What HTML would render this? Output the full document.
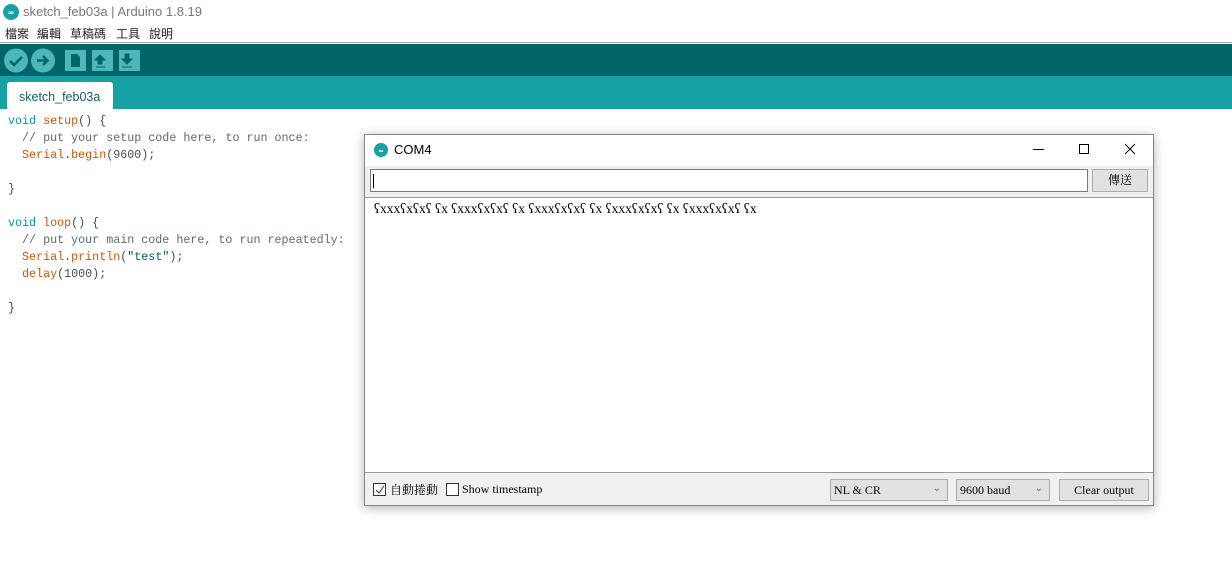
<!DOCTYPE html>
<html><head><meta charset="utf-8"><style>
*{margin:0;padding:0;box-sizing:border-box}
body{width:1232px;height:568px;background:#fff;position:relative;overflow:hidden;font-family:"Liberation Sans","Noto Sans CJK TC",sans-serif}
.a{position:absolute}
.code{font-family:"Liberation Mono",monospace;font-size:11.7px;line-height:17px;white-space:pre;color:#434f54}
.kw{color:#00979c}.fn{color:#d35400}.cm{color:#5c6a6e}
.tb{background:#4db7bb;width:21px;height:21px;position:absolute;top:50px}
.cjk{font-family:"Liberation Serif","Noto Serif CJK SC",serif}
.m{position:absolute;top:25px;font-size:12px;color:#222}
</style></head><body>
<svg class="a" style="left:3px;top:4px" width="16" height="16"><circle cx="8" cy="8" r="8" fill="#17a1a5"/><text x="8" y="11" font-size="8" fill="#fff" text-anchor="middle" font-family="Liberation Sans" font-weight="bold">∞</text></svg>
<div class="a" style="left:23px;top:4px;font-size:13px;color:#777">sketch_feb03a | Arduino 1.8.19</div>
<span class="m" style="left:5px">檔案</span><span class="m" style="left:37px">編輯</span><span class="m" style="left:70px">草稿碼</span><span class="m" style="left:116px">工具</span><span class="m" style="left:149px">說明</span>
<div class="a" style="left:0;top:42px;width:1232px;height:1px;background:#aaa"></div>
<div class="a" style="left:0;top:44px;width:1232px;height:32px;background:#006468"></div>
<svg class="a" style="left:4px;top:48px" width="54" height="25"><circle cx="12" cy="12.5" r="12" fill="#4db7bb"/><path d="M6 13l4 4 8-8" stroke="#006468" stroke-width="2.5" fill="none"/><circle cx="39" cy="12.5" r="12" fill="#4db7bb"/><path d="M33 12.5h10M39 8l4.5 4.5L39 17" stroke="#006468" stroke-width="2.5" fill="none"/></svg>
<div class="tb" style="left:65px"></div><div class="tb" style="left:92px"></div><div class="tb" style="left:119px"></div>
<svg class="a" style="left:65px;top:50px" width="80" height="21"><path d="M6 4h6l3 3v10H6z" fill="#006468"/><path d="M35 5l5 5h-3v4h-4v-4h-3z M31 17h9" fill="#006468" stroke="#006468"/><path d="M60 4h4v5h3l-5 5-5-5h3z M57 17h10" fill="#006468" stroke="#006468"/></svg>
<div class="a" style="left:0;top:76px;width:1232px;height:33px;background:#17a1a5"></div>
<div class="a" style="left:7px;top:82px;width:106px;height:27px;background:#fff;border-radius:3px 3px 0 0;font-size:12.5px;color:#1e5a5c;padding:8px 0 0 12px">sketch_feb03a</div>
<div class="a code" style="left:8px;top:113px"><span class="kw">void</span> <span class="fn">setup</span>() {
  <span class="cm">// put your setup code here, to run once:</span>
  <span class="fn">Serial</span>.<span class="fn">begin</span>(9600);

}

<span class="kw">void</span> <span class="fn">loop</span>() {
  <span class="cm">// put your main code here, to run repeatedly:</span>
  <span class="fn">Serial</span>.<span class="fn">println</span>(<span style="color:#005c5f">"test"</span>);
  <span class="fn">delay</span>(1000);

}</div>
<div class="a" style="left:364px;top:134px;width:790px;height:372px;background:#f0f0f0;border:1px solid #888;box-shadow:0 2px 10px rgba(0,0,0,.3)">
 <div class="a" style="left:0;top:0;width:788px;height:31px;background:#fff"></div>
 <svg class="a" style="left:9px;top:8px" width="14" height="14"><circle cx="7" cy="7" r="7" fill="#17a1a5"/><text x="7" y="10" font-size="7" fill="#fff" text-anchor="middle" font-weight="bold">∞</text></svg>
 <div class="a" style="left:29px;top:7px;font-size:13px;color:#000">COM4</div>
 <div class="a" style="left:668px;top:14px;width:11px;height:1px;background:#000"></div>
 <div class="a" style="left:714px;top:9px;width:10px;height:10px;border:1px solid #000"></div>
 <svg class="a" style="left:759px;top:8px" width="12" height="12"><path d="M1 1l10 10M11 1L1 11" stroke="#000"/></svg>
 <div class="a" style="left:5px;top:34px;width:718px;height:23px;background:#fff;border:1px solid #7a7a7a"><div style="position:absolute;left:2px;top:4px;width:1px;height:14px;background:#000"></div></div>
 <div class="a cjk" style="left:727px;top:34px;width:56px;height:23px;background:#e1e1e1;border:1px solid #adadad;font-size:12px;text-align:center;line-height:21px">傳送</div>
 <div class="a" style="left:0;top:62px;width:788px;height:276px;background:#fff;border-top:1px solid #999;border-bottom:1px solid #999"></div>
 <div class="a" style="left:9px;top:66px;font-family:'Liberation Serif',serif;font-size:13.5px;color:#000;white-space:pre">ʕxxxʕxʕxʕ ʕx ʕxxxʕxʕxʕ ʕx ʕxxxʕxʕxʕ ʕx ʕxxxʕxʕxʕ ʕx ʕxxxʕxʕxʕ ʕx</div>
 <div class="a" style="left:8px;top:348px;width:13px;height:13px;border:1px solid #333;background:#fff"><svg style="position:absolute;left:1px;top:1px" width="10" height="10"><path d="M1 5l3 3 5-7" stroke="#333" fill="none"/></svg></div>
 <div class="a cjk" style="left:25px;top:346px;font-size:12px">自動捲動</div>
 <div class="a" style="left:81px;top:348px;width:13px;height:13px;border:1px solid #333;background:#fff"></div>
 <div class="a" style="left:97px;top:347px;font-family:'Liberation Serif',serif;font-size:12px">Show timestamp</div>
 <div class="a" style="left:465px;top:344px;width:118px;height:22px;background:#e1e1e1;border:1px solid #adadad;font-family:'Liberation Serif',serif;font-size:12px;padding:3px 0 0 3px">NL &amp; CR<span style="position:absolute;right:6px;top:3px;color:#666;font-size:10px">⌄</span></div>
 <div class="a" style="left:591px;top:344px;width:94px;height:22px;background:#e1e1e1;border:1px solid #adadad;font-family:'Liberation Serif',serif;font-size:12px;padding:3px 0 0 3px">9600 baud<span style="position:absolute;right:6px;top:3px;color:#666;font-size:10px">⌄</span></div>
 <div class="a" style="left:694px;top:344px;width:90px;height:22px;background:#e1e1e1;border:1px solid #adadad;font-family:'Liberation Serif',serif;font-size:12px;text-align:center;line-height:20px">Clear output</div>
</div>
</body></html>
